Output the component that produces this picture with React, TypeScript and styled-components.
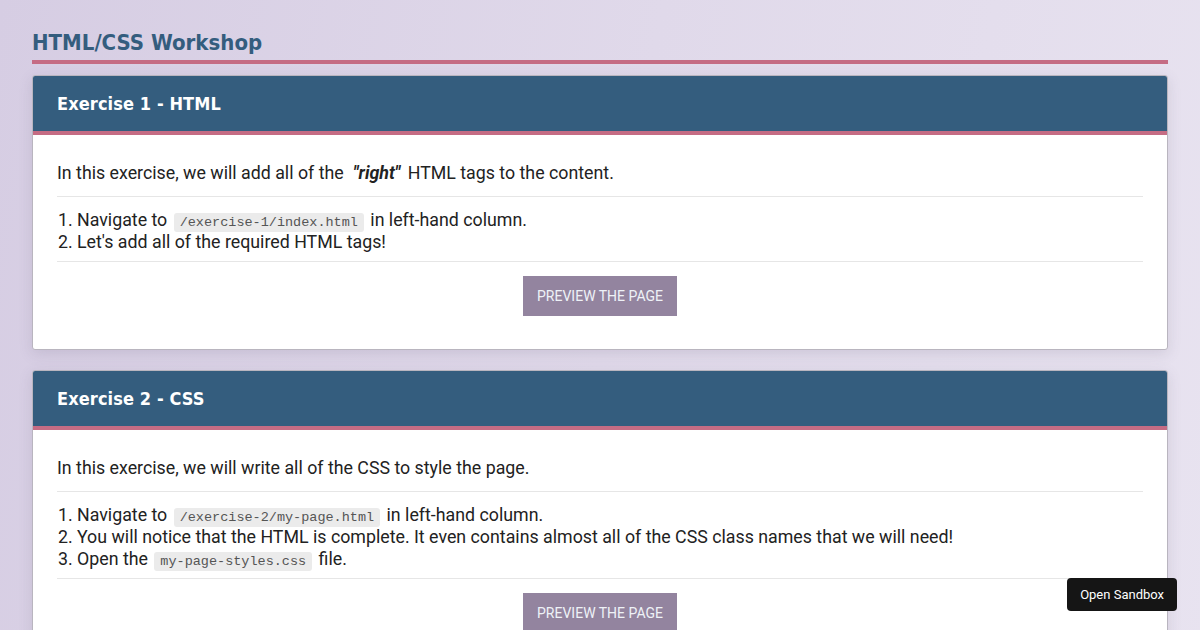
import React from 'react';
import styled, { createGlobalStyle } from 'styled-components';

const GlobalStyle = createGlobalStyle`
  html, body {
    margin: 0;
    padding: 0;
  }
  body {
    min-height: 100vh;
    background: linear-gradient(100deg, #d6cde3 0%, #e0d9ea 50%, #e8e3f0 100%);
    font-family: Roboto, "Open Sans", sans-serif;
    color: #222;
  }
`;

const Page = styled.div`
  padding: 29px 32px 40px;
`;

const Title = styled.h1`
  margin: 0;
  padding-bottom: 3px;
  font-family: "DejaVu Sans Condensed", "DejaVu Sans", sans-serif;
  font-weight: 700;
  font-size: 22px;
  line-height: 28px;
  letter-spacing: 0;
  color: #345d7e;
  border-bottom: 4px solid #c56c84;
`;

const Card = styled.section`
  margin-top: 11px;
  margin-bottom: 20px;
  background: #fff;
  border: 1px solid #b9b5bf;
  border-radius: 3px;
  box-shadow: 0 4px 14px rgba(90, 80, 110, 0.15);
  overflow: hidden;
`;

const CardHeader = styled.header`
  height: 55px;
  display: flex;
  align-items: center;
  padding: 0 24px;
  background: #345d7e;
  border-bottom: 4px solid #c56c84;
  font-family: "DejaVu Sans Condensed", "DejaVu Sans", sans-serif;
  font-weight: 700;
  font-size: 18px;
  letter-spacing: 0.1px;
  color: #fff;
`;

const CardBody = styled.div`
  padding: 24px 24px 33px;
  font-size: 17.8px;
  line-height: 22px;
`;

const Intro = styled.p`
  margin: 3px 0 0;
  padding-bottom: 12px;
  border-bottom: 1px solid #e6e6e6;

  em {
    font-weight: 700;
    margin: 0 3px 0 5px;
  }
`;

const Steps = styled.ol`
  margin: 0;
  padding: 12px 0 8px 20px;
  border-bottom: 1px solid #e6e6e6;
`;

const Code = styled.code`
  font-family: "Liberation Mono", monospace;
  font-size: 13.5px;
  line-height: 1;
  color: #555;
  background: #ebebeb;
  border-radius: 3px;
  padding: 2px 6px;
  margin: 0 2px;
`;

const Actions = styled.div`
  display: flex;
  justify-content: center;
  padding-top: 14px;
`;

const PreviewButton = styled.button`
  width: 154px;
  height: 40px;
  border: none;
  background: #93849f;
  color: #eef2f7;
  font-family: Roboto, sans-serif;
  font-size: 14px;
  text-transform: uppercase;
  cursor: pointer;
`;

const SandboxButton = styled.a`
  position: fixed;
  right: 23px;
  bottom: 19px;
  padding: 9px 13px;
  background: #151515;
  color: #fff;
  border-radius: 4px;
  font-family: Roboto, sans-serif;
  font-size: 13px;
  text-decoration: none;
`;

const App: React.FC = () => {
  return (
    <>
      <GlobalStyle />
      <Page>
        <Title>HTML/CSS Workshop</Title>

        <Card>
          <CardHeader>Exercise 1 - HTML</CardHeader>
          <CardBody>
            <Intro>
              In this exercise, we will add all of the <em>"right"</em> HTML tags to the content.
            </Intro>
            <Steps>
              <li>
                Navigate to <Code>/exercise-1/index.html</Code> in left-hand column.
              </li>
              <li>Let's add all of the required HTML tags!</li>
            </Steps>
            <Actions>
              <PreviewButton>Preview the page</PreviewButton>
            </Actions>
          </CardBody>
        </Card>

        <Card>
          <CardHeader>Exercise 2 - CSS</CardHeader>
          <CardBody>
            <Intro>In this exercise, we will write all of the CSS to style the page.</Intro>
            <Steps>
              <li>
                Navigate to <Code>/exercise-2/my-page.html</Code> in left-hand column.
              </li>
              <li>
                You will notice that the HTML is complete. It even contains almost all of the CSS class
                names that we will need!
              </li>
              <li>
                Open the <Code>my-page-styles.css</Code> file.
              </li>
            </Steps>
            <Actions>
              <PreviewButton>Preview the page</PreviewButton>
            </Actions>
          </CardBody>
        </Card>
      </Page>
      <SandboxButton href="#">Open Sandbox</SandboxButton>
    </>
  );
};

export default App;
